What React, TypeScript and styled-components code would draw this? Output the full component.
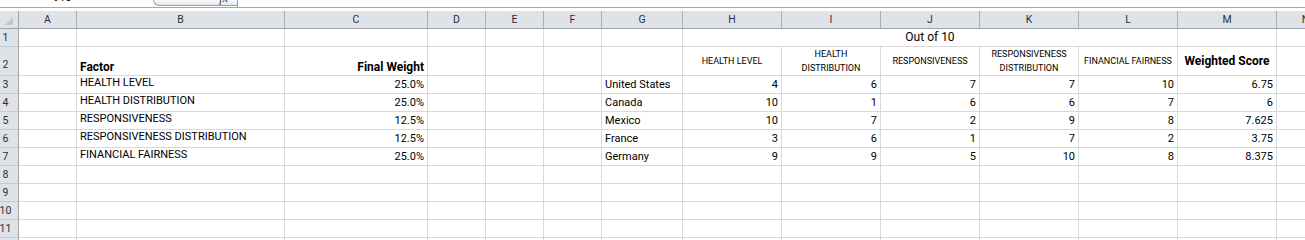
import styled, { createGlobalStyle } from "styled-components";

const GlobalStyle = createGlobalStyle`
  html, body {
    margin: 0;
    padding: 0;
    background: #ffffff;
    overflow: hidden;
  }
  body {
    font-family: Roboto, "Liberation Sans", sans-serif;
    color: #000000;
  }
`;

const COLUMNS = ["A", "B", "C", "D", "E", "F", "G", "H", "I", "J", "K", "L", "M", "N"];
const WIDTHS = [58, 208, 143, 58, 58, 58, 81, 99, 99, 99, 99, 99, 99, 58];

type Align = "left" | "right" | "center";

type CellData = {
  text?: string;
  align?: Align;
  middle?: boolean;
  bold?: boolean;
  size?: number;
  lift?: number;
  span?: number;
};

const factors: [string, string][] = [
  ["HEALTH LEVEL", "25.0%"],
  ["HEALTH DISTRIBUTION", "25.0%"],
  ["RESPONSIVENESS", "12.5%"],
  ["RESPONSIVENESS DISTRIBUTION", "12.5%"],
  ["FINANCIAL FAIRNESS", "25.0%"],
];

const countries: [string, number[], string][] = [
  ["United States", [4, 6, 7, 7, 10], "6.75"],
  ["Canada", [10, 1, 6, 6, 7], "6"],
  ["Mexico", [10, 7, 2, 9, 8], "7.625"],
  ["France", [3, 6, 1, 7, 2], "3.75"],
  ["Germany", [9, 9, 5, 10, 8], "8.375"],
];

const smallHeads = [
  "HEALTH LEVEL",
  "HEALTH\nDISTRIBUTION",
  "RESPONSIVENESS",
  "RESPONSIVENESS\nDISTRIBUTION",
  "FINANCIAL FAIRNESS",
];

// builds the cells of one sheet row, keyed by column letter
function buildRow(r: number): Record<string, CellData> {
  const row: Record<string, CellData> = {};
  if (r === 1) {
    row.H = { text: "Out of 10", align: "center", size: 12, lift: 1, span: 5 };
  }
  if (r === 2) {
    row.B = { text: "Factor", bold: true, size: 12 };
    row.C = { text: "Final Weight", bold: true, size: 12, align: "right" };
    smallHeads.forEach((h, i) => {
      row[COLUMNS[7 + i]] = { text: h, align: "center", middle: true, size: 9 };
    });
    row.M = { text: "Weighted Score", bold: true, size: 12, align: "center", middle: true };
  }
  if (r >= 3 && r <= 7) {
    const f = factors[r - 3];
    row.B = { text: f[0], lift: 2 };
    row.C = { text: f[1], align: "right" };
    const c = countries[r - 3];
    row.G = { text: c[0] };
    c[1].forEach((v, i) => {
      row[COLUMNS[7 + i]] = { text: String(v), align: "right" };
    });
    row.M = { text: c[2], align: "right" };
  }
  return row;
}

const ROWS = [1, 2, 3, 4, 5, 6, 7, 8, 9, 10, 11, 12];

export default function App() {
  return (
    <>
      <GlobalStyle />
      <Window>
        <FormulaBar>
          <NameBox>916</NameBox>
          <Splitter>
            <FxLabel>fx</FxLabel>
          </Splitter>
          <FormulaInput />
        </FormulaBar>
        <Sheet>
          <Corner>
            <svg width="18" height="17" viewBox="0 0 18 17">
              <polygon points="13,6 13,14 5,14" fill="#c2c7cd" />
            </svg>
          </Corner>
          {COLUMNS.map((c) => (
            <ColHeader key={c}>{c}</ColHeader>
          ))}
          {ROWS.map((r) => {
            const data = buildRow(r);
            const cells: JSX.Element[] = [];
            let skip = 0;
            COLUMNS.forEach((c) => {
              if (skip > 0) {
                skip -= 1;
                return;
              }
              const d = data[c];
              if (d?.span) skip = d.span - 1;
              cells.push(
                <Cell
                  key={c}
                  $align={d?.align}
                  $middle={d?.middle}
                  $bold={d?.bold}
                  $size={d?.size}
                  $lift={d?.lift}
                  $span={d?.span}
                >
                  {d?.text}
                </Cell>
              );
            });
            return [
              <RowHeader key={"h" + r} $tall={r === 2}>
                {r}
              </RowHeader>,
              ...cells,
            ];
          })}
        </Sheet>
      </Window>
    </>
  );
}

const Window = styled.div`
  width: 1305px;
  height: 240px;
  overflow: hidden;
  background: #ffffff;
`;

const FormulaBar = styled.div`
  display: flex;
  height: 7px;
  border-bottom: 1px solid #a4a8ae;
  margin-bottom: 3px;
  overflow: hidden;
`;

const NameBox = styled.div`
  flex: none;
  width: 153px;
  box-sizing: border-box;
  padding: 0 0 4px 53px;
  display: flex;
  align-items: flex-end;
  font-size: 11px;
  line-height: 11px;
  color: #000;
`;

const Splitter = styled.div`
  flex: none;
  width: 84px;
  height: 6px;
  box-sizing: border-box;
  border: 1px solid #9c9fa4;
  border-top: none;
  border-right: none;
  border-bottom-left-radius: 14px;
  background: linear-gradient(#fbfbfb, #e4e5e7);
  display: flex;
  justify-content: flex-end;
  align-items: flex-end;
  padding: 0 9px 2px 0;
`;

const FxLabel = styled.span`
  font-family: "Liberation Serif", serif;
  font-style: italic;
  font-size: 12px;
  line-height: 10px;
  color: #333;
`;

const FormulaInput = styled.div`
  flex: 1;
  border-left: 1px solid #9c9fa4;
`;

const Sheet = styled.div`
  display: grid;
  grid-template-columns: 19px ${WIDTHS.map((w) => w + "px").join(" ")};
  grid-template-rows: 18px 18px 29px repeat(10, 18px);
`;

const Corner = styled.div`
  box-sizing: border-box;
  background: #dfe3e8;
  border-right: 1px solid #9ea4ab;
  border-bottom: 1px solid #9ea4ab;
  display: flex;
`;

const ColHeader = styled.div`
  box-sizing: border-box;
  background: #dfe3e8;
  border-right: 1px solid #a9afb6;
  border-bottom: 1px solid #9ea4ab;
  padding-top: 1px;
  font-size: 10.5px;
  line-height: 16px;
  text-align: center;
  color: #27303a;
`;

const RowHeader = styled.div<{ $tall?: boolean }>`
  box-sizing: border-box;
  background: #dfe3e8;
  border-right: 1px solid #9ea4ab;
  border-bottom: 1px solid #c5cad0;
  display: flex;
  align-items: ${(p) => (p.$tall ? "flex-end" : "center")};
  justify-content: center;
  padding: 0 7px ${(p) => (p.$tall ? 3 : 0)}px 0;
  font-size: 10.5px;
  line-height: 14px;
  color: #27303a;
`;

const Cell = styled.div<{
  $align?: Align;
  $middle?: boolean;
  $bold?: boolean;
  $size?: number;
  $lift?: number;
  $span?: number;
}>`
  box-sizing: border-box;
  grid-column: span ${(p) => p.$span ?? 1};
  display: flex;
  justify-content: ${(p) =>
    p.$align === "right" ? "flex-end" : p.$align === "center" ? "center" : "flex-start"};
  align-items: ${(p) => (p.$middle ? "center" : "flex-end")};
  text-align: ${(p) => p.$align ?? "left"};
  border-right: 1px solid #d9d9d9;
  border-bottom: 1px solid #d9d9d9;
  padding: 0 3px ${(p) => (p.$middle ? 0 : 1 + (p.$lift ?? 0))}px 3px;
  font-size: ${(p) => p.$size ?? 11}px;
  font-weight: ${(p) => (p.$bold ? 700 : 400)};
  line-height: 14px;
  white-space: pre-line;
  overflow: hidden;
  color: #000;
`;
